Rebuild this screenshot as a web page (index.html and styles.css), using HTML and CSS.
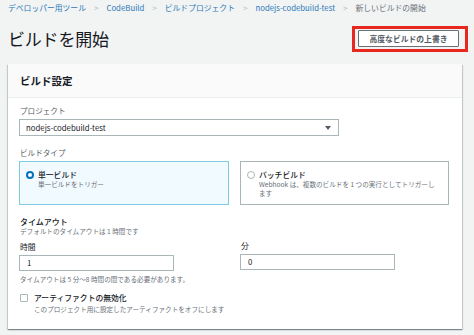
FILE: index.html
```html
<!DOCTYPE html>
<html lang="ja">
<head>
<meta charset="utf-8">
<link rel="stylesheet" href="styles.css">
</head>
<body>
<div class="page">
  <nav class="crumbs">
    <a class="crumb">デベロッパー用ツール</a><span class="sep">&gt;</span>
    <a class="crumb">CodeBuild</a><span class="sep">&gt;</span>
    <a class="crumb">ビルドプロジェクト</a><span class="sep">&gt;</span>
    <a class="crumb">nodejs-codebuild-test</a><span class="sep">&gt;</span>
    <span class="crumb current">新しいビルドの開始</span>
  </nav>
  <header class="head">
    <h1 class="title">ビルドを開始</h1>
    <div class="btn-wrap">
      <button class="btn">高度なビルドの上書き</button>
      <span class="highlight"></span>
    </div>
  </header>
  <section class="card">
    <div class="card-head">ビルド設定</div>
    <div class="card-body">
      <div class="label">プロジェクト</div>
      <div class="select"><span>nodejs-codebuild-test</span><span class="caret"></span></div>

      <div class="label type-label">ビルドタイプ</div>
      <div class="tiles">
        <div class="tile selected">
          <span class="radio on"></span>
          <div>
            <div class="tile-title">単一ビルド</div>
            <div class="tile-desc">単一ビルドをトリガー</div>
          </div>
        </div>
        <div class="tile">
          <span class="radio"></span>
          <div>
            <div class="tile-title">バッチビルド</div>
            <div class="tile-desc">Webhook は、複数のビルドを 1 つの実行としてトリガーします</div>
          </div>
        </div>
      </div>

      <div class="section-title">タイムアウト</div>
      <div class="desc">デフォルトのタイムアウトは 1 時間です</div>
      <div class="cols">
        <div class="col">
          <div class="label small">時間</div>
          <div class="input">1</div>
        </div>
        <div class="col">
          <div class="label small">分</div>
          <div class="input">0</div>
        </div>
      </div>
      <div class="hint">タイムアウトは 5 分〜8 時間の間である必要があります。</div>

      <div class="check-row">
        <span class="checkbox"></span>
        <div>
          <div class="check-title">アーティファクトの無効化</div>
          <div class="desc check-desc">このプロジェクト用に設定したアーティファクトをオフにします</div>
        </div>
      </div>
    </div>
  </section>
</div>
</body>
</html>
```

FILE: styles.css
```css
* { box-sizing: border-box; }
html, body { margin: 0; padding: 0; }
body {
  background: #f2f3f3;
  font-family: "Noto Sans CJK JP", "Noto Sans", sans-serif;
  color: #16191f;
  width: 474px;
  height: 335px;
  overflow: hidden;
}
.page { padding: 2px 12px 0 8px; }
.crumbs {
  display: flex;
  align-items: center;
  font-size: 7.8px;
  line-height: 12px;
  height: 12px;
  white-space: nowrap;
}
.crumb { color: #2a7ab8; }
.crumb.current { color: #687078; }
.sep { color: #aab7b8; margin: 0 8px; font-size: 8px; }
.head {
  display: flex;
  justify-content: space-between;
  align-items: center;
  height: 39px;
  margin-top: 5px;
  padding-right: 3px;
}
.title {
  margin: 0;
  font-size: 17px;
  font-weight: 400;
  line-height: 24px;
  color: #16191f;
  letter-spacing: -0.2px;
}
.btn-wrap { position: relative; display: flex; }
.btn {
  font-family: inherit;
  font-size: 7.8px;
  font-weight: 700;
  color: #545b64;
  background: #ffffff;
  border: 1px solid #687078;
  border-radius: 1px;
  width: 101px;
  height: 17px;
  padding: 0;
  line-height: 15px;
}
.highlight {
  position: absolute;
  left: -6px;
  right: -9px;
  top: -4px;
  bottom: -5px;
  border: 3px solid #e8281e;
}
.card {
  margin-top: 6px;
  background: #ffffff;
  width: 454px;
  height: 265px;
  box-shadow: 0 1px 1px 0 rgba(0,28,36,.3), 1px 1px 1px 0 rgba(0,28,36,.15), -1px 1px 1px 0 rgba(0,28,36,.15);
}
.card-head {
  height: 34px;
  background: #fafafa;
  border-bottom: 1px solid #eaeded;
  padding-left: 12px;
  font-size: 10.5px;
  font-weight: 700;
  line-height: 33px;
  color: #16191f;
}
.card-body { padding: 7px 13px 0 11px; }
.label {
  font-size: 7.6px;
  line-height: 11px;
  color: #545b64;
  padding-left: 1px;
}
.select {
  margin-top: 3px;
  width: 320px;
  height: 17px;
  border: 1px solid #aab7b8;
  display: flex;
  justify-content: space-between;
  align-items: center;
  padding: 0 6px 0 6px;
  font-size: 7.8px;
  color: #16191f;
}
.caret {
  width: 0; height: 0;
  border-left: 3px solid transparent;
  border-right: 3px solid transparent;
  border-top: 4px solid #545b64;
  margin-right: 1px;
}
.type-label { margin-top: 11px; }
.tiles {
  display: grid;
  grid-template-columns: 210px 209px;
  column-gap: 11px;
  margin-top: 3px;
}
.tile {
  height: 44px;
  border: 1px solid #aab7b8;
  display: flex;
  align-items: flex-start;
  gap: 4px;
  padding: 7px 8px 0 6px;
}
.tile.selected {
  background: #f1faff;
  border-color: #7fcbe1;
}
.radio {
  flex: none;
  width: 8px; height: 8px;
  border-radius: 50%;
  border: 1px solid #aab7b8;
  background: #fff;
  margin-top: 2px;
}
.radio.on {
  border: 2.5px solid #0073bb;
}
.tile-title {
  font-size: 7.8px;
  line-height: 11px;
  color: #16191f;
  font-weight: 500;
}
.tile-desc {
  font-size: 6.6px;
  line-height: 9px;
  color: #687078;
}
.section-title {
  margin-top: 12px;
  font-size: 8px;
  line-height: 10px;
  font-weight: 500;
  color: #16191f;
  padding-left: 1px;
}
.desc {
  font-size: 6.6px;
  line-height: 9px;
  color: #687078;
  padding-left: 1px;
}
.cols {
  display: grid;
  grid-template-columns: 221px 209px;
  margin-top: 0;
}
.col .label.small { margin-top: 5px; font-size: 7.8px; line-height: 11px; color: #16191f; }
.col:last-child .label.small { margin-top: 4px; }
.input {
  margin-top: 3px;
  width: 155px;
  height: 16px;
  border: 1px solid #aab7b8;
  padding-left: 7px;
  font-size: 7.8px;
  line-height: 14px;
  color: #16191f;
}
.hint {
  margin-top: 4px;
  font-size: 6.6px;
  line-height: 9px;
  color: #687078;
  padding-left: 1px;
}
.check-row {
  margin-top: 8px;
  display: flex;
  align-items: flex-start;
  gap: 6px;
  padding-left: 1px;
}
.checkbox {
  flex: none;
  width: 8px; height: 8px;
  border: 1px solid #aab7b8;
  border-radius: 1px;
  background: #fff;
  margin-top: 2px;
}
.check-title {
  font-size: 7.8px;
  line-height: 11px;
  color: #16191f;
  font-weight: 500;
}
.check-desc { margin-top: 2px; padding-left: 0; }
```
